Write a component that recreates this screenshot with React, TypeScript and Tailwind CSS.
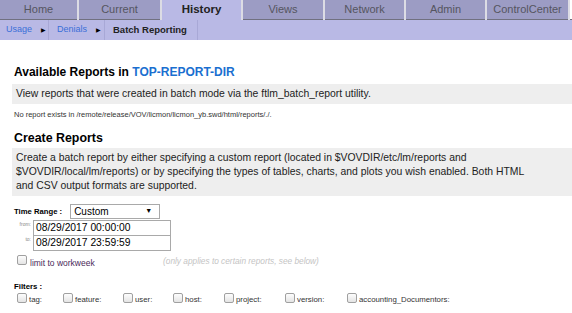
import React from "react";

const tabs = [
  { label: "Home", w: "w-[77px]" },
  { label: "Current", w: "w-[81px]" },
  { label: "History", w: "w-[79px]", active: true },
  { label: "Views", w: "w-[80px]" },
  { label: "Network", w: "w-[79px]" },
  { label: "Admin", w: "w-[79px]" },
  { label: "ControlCenter", w: "w-[81px]" },
];

const filters = [
  { label: "tag:", w: "w-[46px]" },
  { label: "feature:", w: "w-[60px]" },
  { label: "user:", w: "w-[50px]" },
  { label: "host:", w: "w-[51px]" },
  { label: "project:", w: "w-[61px]" },
  { label: "version:", w: "w-[62px]" },
  { label: "accounting_Documentors:", w: "" },
];

function Box() {
  return (
    <span className="inline-block h-[10px] w-[10px] shrink-0 rounded-[2px] border border-[#a0a0a0] bg-gradient-to-b from-[#fdfdfd] to-[#e4e4e4]" />
  );
}

export default function App() {
  return (
    <div className="h-[313px] w-[572px] overflow-hidden bg-white font-['Liberation_Sans',Arial,sans-serif] text-black">
      {/* tabs */}
      <div className="flex h-[20px] gap-[2px] bg-[#dcdce4]">
        {tabs.map((t) =>
          t.active ? (
            <div
              key={t.label}
              className={`${t.w} flex h-[20px] items-center justify-center bg-[#b9b9e5] pb-[1px] text-[11.5px] font-bold text-[#222]`}
            >
              {t.label}
            </div>
          ) : (
            <div
              key={t.label}
              className={`${t.w} flex h-[20px] items-center justify-center border-b border-[#707080] bg-[#9c9cc4] text-[11px] text-[#555560]`}
            >
              {t.label}
            </div>
          ),
        )}
        <div className="h-[20px] flex-1 border-b border-[#707080] bg-white" />
      </div>

      {/* sub nav */}
      <div className="flex h-[20px] items-stretch bg-[#b9b9e5] text-[9px]">
        <div className="flex w-[49px] items-center border-r border-[#a8a8d6] pl-[6px]">
          <span className="text-[#3a6fd8]">Usage</span>
          <span className="ml-[9px] text-[6px] text-black">▶</span>
        </div>
        <div className="flex w-[56px] items-center border-r border-[#a8a8d6] pl-[8px]">
          <span className="text-[#3a6fd8]">Denials</span>
          <span className="ml-[9px] text-[6px] text-black">▶</span>
        </div>
        <div className="flex w-[93px] items-center border-r border-[#a8a8d6] pl-[8px] text-[9.5px] font-bold text-[#222]">
          Batch Reporting
        </div>
      </div>

      <div className="pl-[12px]">
        <h2 className="mt-[25px] h-[14px] pl-[2px] text-[12px] leading-[14px] font-bold">
          Available Reports in <span className="text-[#1a6fd0]">TOP-REPORT-DIR</span>
        </h2>
        <div className="mt-[5px] flex h-[20px] items-center bg-[#eeeeee] pl-[4px] text-[10.4px] text-[#222]">
          View reports that were created in batch mode via the ftlm_batch_report utility.
        </div>
        <p className="mt-[6px] h-[10px] pl-[2px] text-[7.5px] leading-[10px] text-[#333]">
          No report exists in /remote/release/VOV/licmon/licmon_yb.swd/html/reports/./.
        </p>

        <h2 className="mt-[11px] h-[14px] pl-[2px] text-[12.4px] leading-[14px] font-bold">Create Reports</h2>
        <div className="mt-[3px] bg-[#eeeeee] py-[3px] pl-[4px] pr-[32px] text-[10.4px] leading-[14px] text-[#222]">
          Create a batch report by either specifying a custom report (located in $VOVDIR/etc/lm/reports and
          $VOVDIR/local/lm/reports) or by specifying the types of tables, charts, and plots you wish enabled. Both HTML
          and CSV output formats are supported.
        </div>

        <div className="mt-[8px] flex h-[15px] items-center">
          <span className="pl-[2px] text-[7.7px] font-bold">Time Range :</span>
          <div className="ml-[8px] flex h-[15px] w-[90px] items-center justify-between border border-[#a9a9a9] bg-white pl-[3px] pr-[7px] text-[10px]">
            <span>Custom</span>
            <span className="text-[7px]">▼</span>
          </div>
        </div>
        <div className="mt-[1px] flex h-[16px] items-start">
          <span className="mt-[1px] w-[19px] text-right text-[5px] leading-[6px] text-[#888]">from:</span>
          <div className="ml-[2px] flex h-[16px] w-[138px] items-center border border-[#a9a9a9] bg-white pl-[2px] text-[10.3px]">
            08/29/2017 00:00:00
          </div>
        </div>
        <div className="-mt-[1px] flex h-[16px] items-start">
          <span className="mt-[1px] w-[19px] text-right text-[5px] leading-[6px] text-[#888]">to:</span>
          <div className="ml-[2px] flex h-[16px] w-[138px] items-center border border-[#a9a9a9] bg-white pl-[2px] text-[10.3px]">
            08/29/2017 23:59:59
          </div>
        </div>
        <div className="mt-[4px] flex h-[10px] items-center">
          <div className="ml-[5px] flex w-[146px] items-center gap-[3px]">
            <Box />
            <span className="mt-[5px] text-[8.5px] leading-[10px] text-[#4a2a5a]">limit to workweek</span>
          </div>
          <span className="mt-[2px] text-[8.3px] italic text-[#c4c4c4]">(only applies to certain reports, see below)</span>
        </div>

        <div className="mt-[17px] h-[10px] pl-[2px] text-[7.8px] leading-[10px] font-bold">Filters :</div>
        <div className="mt-[1px] flex h-[10px] items-center pl-[5px]">
          {filters.map((f) => (
            <div key={f.label} className={`flex shrink-0 items-center gap-[2px] ${f.w}`}>
              <Box />
              <span className="mt-[3px] text-[7.8px] leading-[10px] text-[#333]">{f.label}</span>
            </div>
          ))}
        </div>
      </div>
    </div>
  );
}
